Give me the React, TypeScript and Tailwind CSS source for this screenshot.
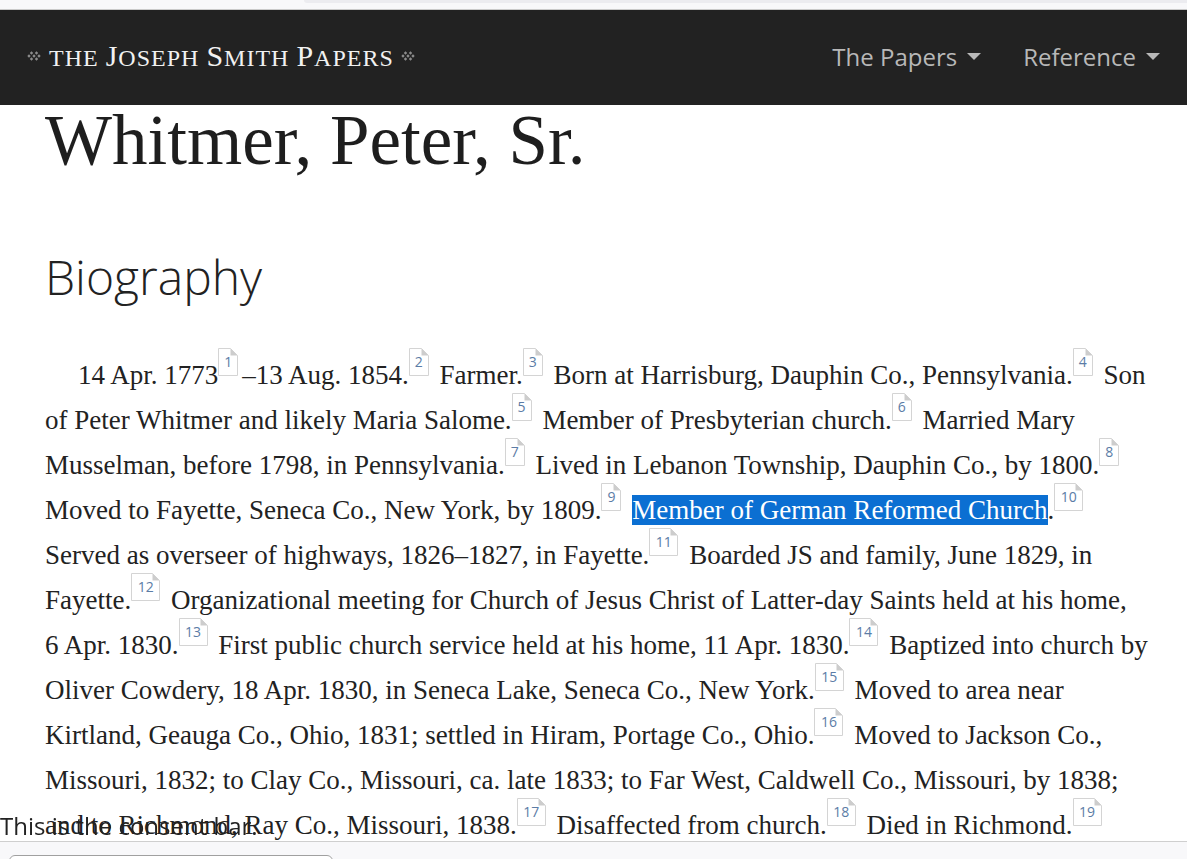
import React from "react";

function Fn({ n }: { n: number }) {
  const wide = n >= 10;
  const w = wide ? 29 : 20;
  const h = 28;
  return (
    <span
      className={`relative -top-[5px] mr-[4px] inline-block h-[28px] align-top indent-0 ${wide ? "w-[29px]" : "w-[20px]"}`}
    >
      <svg className="absolute left-0 top-0" width={w} height={h}>
        <path d={`M0.5 0.5H${w - 7.5}L${w - 0.5} 7.5V${h - 0.5}H0.5Z`} fill="#fff" stroke="#d4d4d4" />
        <path d={`M${w - 7.5} 0.5V7.5H${w - 0.5}Z`} fill="#cdcdcd" />
      </svg>
      <span className="relative flex h-full items-center justify-center font-['Open_Sans',sans-serif] text-[14px] leading-none text-[#5b7ca6]">
        {n}
      </span>
    </span>
  );
}

function Dots() {
  const pts = [
    [5.5, 2],
    [10.5, 2],
    [3, 5],
    [8, 5],
    [13, 5],
    [5.5, 8],
    [10.5, 8],
  ];
  return (
    <svg width="17" height="10" viewBox="0 0 17 10">
      {pts.map(([x, y], i) => (
        <path key={i} d={`M${x} ${y - 1.7}L${x + 1.7} ${y}L${x} ${y + 1.7}L${x - 1.7} ${y}Z`} fill="#8c8c8c" />
      ))}
    </svg>
  );
}

function Caret() {
  return (
    <svg width="14" height="8" viewBox="0 0 14 8" className="ml-[10px]">
      <path d="M0 0H14L7 7Z" fill="#b8b8b8" />
    </svg>
  );
}

export default function App() {
  const big = "text-[30px]";
  const sm = "text-[24px]";
  return (
    <div className="relative min-h-screen overflow-hidden bg-white">
      {/* browser top strip */}
      <div className="relative h-[10px] border-b border-[#cacaca] bg-[#f8f8fa]">
        <div className="absolute left-[304px] right-0 top-0 h-[3px] rounded-bl-[3px] bg-[#ececf0]" />
      </div>

      {/* navbar */}
      <header className="flex h-[95px] items-center justify-between bg-[#222222] pl-[26px] pr-[27px]">
        <div className="mb-[4px] flex items-center gap-[6px]">
          <Dots />
          <span className="font-['Liberation_Serif',serif] leading-none tracking-[1px] text-[#f1f1f1]">
            <span className={sm}>THE </span>
            <span className={big}>J</span>
            <span className={sm}>OSEPH </span>
            <span className={big}>S</span>
            <span className={sm}>MITH </span>
            <span className={big}>P</span>
            <span className={sm}>APERS</span>
          </span>
          <Dots />
        </div>
        <nav className="mb-[2px] flex items-center gap-[42px] font-['Open_Sans',sans-serif] text-[24px] text-[#b8b8b8]">
          <div className="flex items-center">
            The Papers
            <Caret />
          </div>
          <div className="flex items-center">
            Reference
            <Caret />
          </div>
        </nav>
      </header>

      {/* content */}
      <main className="pl-[45px] pr-[20px]">
        <h1 className="font-['Liberation_Serif',serif] text-[71px] leading-none text-[#1e1e1e]">
          Whitmer, Peter, Sr.
        </h1>
        <h2 className="mt-[77px] font-['Open_Sans',sans-serif] text-[48px] font-light leading-none text-[#222]">
          Biography
        </h2>
        <p className="mt-[52px] whitespace-nowrap indent-[33px] font-['Liberation_Serif',serif] text-[27px] leading-[45px] text-[#222]">
          14 Apr. 1773<Fn n={1} />–13 Aug. 1854.<Fn n={2} /> Farmer.<Fn n={3} /> Born at Harrisburg, Dauphin Co.,
          Pennsylvania.<Fn n={4} /> Son
          <br />
          of Peter Whitmer and likely Maria Salome.<Fn n={5} /> Member of Presbyterian church.<Fn n={6} /> Married Mary
          <br />
          Musselman, before 1798, in Pennsylvania.<Fn n={7} /> Lived in Lebanon Township, Dauphin Co., by 1800.
          <Fn n={8} />
          <br />
          Moved to Fayette, Seneca Co., New York, by 1809.<Fn n={9} />{" "}
          <span className="bg-[#0b6fd2] text-white">Member of German Reformed Church</span>.<Fn n={10} />
          <br />
          Served as overseer of highways, 1826–1827, in Fayette.<Fn n={11} /> Boarded JS and family, June 1829, in
          <br />
          Fayette.<Fn n={12} /> Organizational meeting for Church of Jesus Christ of Latter-day Saints held at his home,
          <br />
          6 Apr. 1830.<Fn n={13} /> First public church service held at his home, 11 Apr. 1830.<Fn n={14} /> Baptized
          into church by
          <br />
          Oliver Cowdery, 18 Apr. 1830, in Seneca Lake, Seneca Co., New York.<Fn n={15} /> Moved to area near
          <br />
          Kirtland, Geauga Co., Ohio, 1831; settled in Hiram, Portage Co., Ohio.<Fn n={16} /> Moved to Jackson Co.,
          <br />
          Missouri, 1832; to Clay Co., Missouri, ca. late 1833; to Far West, Caldwell Co., Missouri, by 1838;
          <br />
          and to Richmond, Ray Co., Missouri, 1838.<Fn n={17} /> Disaffected from church.<Fn n={18} /> Died in
          Richmond.<Fn n={19} />
        </p>
      </main>

      {/* consent bar */}
      <div className="fixed left-0 top-[814px] font-['Open_Sans',sans-serif] text-[24px] leading-none text-[#222]">
        This is the consent bar.
      </div>
      <div className="fixed bottom-0 left-0 right-0 top-[841px] border-t border-[#cfcfcf] bg-[#f8f8fa]">
        <div className="absolute left-[9px] top-[13px] h-[20px] w-[324px] rounded-[6px] border border-[#a0a0a0] bg-white" />
      </div>
    </div>
  );
}
